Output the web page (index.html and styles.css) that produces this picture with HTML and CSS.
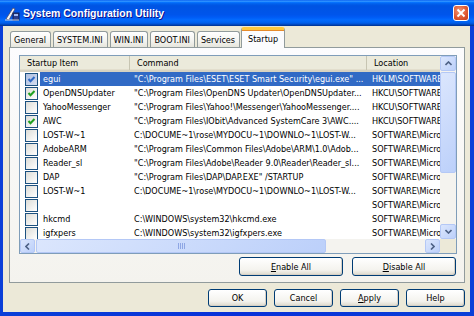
FILE: index.html
```html
<!DOCTYPE html>
<html lang="en">
<head>
  <meta charset="UTF-8" />
  <title>System Configuration Utility</title>
  <link rel="stylesheet" href="styles.css">
</head>
<body>
  <div class="window">
    <div class="titlebar">
      <svg class="app-icon" width="16" height="16" viewBox="0 0 16 16">
        <path d="M2 14 L9 3 L11 4 L5 15 Z" fill="#f4f4f4" stroke="#4a4a6a" stroke-width="0.8"/>
        <rect x="9" y="8" width="6" height="7" fill="#2b3f8f" stroke="#10183a" stroke-width="0.8"/>
        <rect x="10" y="9" width="4" height="2" fill="#9fb8ef"/>
        <path d="M1 15 H15" stroke="#cfd6e6" stroke-width="1"/>
      </svg>
      <span class="title">System Configuration Utility</span>
      <div class="close-btn">
        <svg width="10" height="10" viewBox="0 0 10 10"><path d="M1.5 1.5 L8.5 8.5 M8.5 1.5 L1.5 8.5" stroke="#fff" stroke-width="1.8"/></svg>
      </div>
    </div>

    <div class="client">
      <div class="tabs">
        <div class="tab">General</div>
        <div class="tab">SYSTEM.INI</div>
        <div class="tab">WIN.INI</div>
        <div class="tab">BOOT.INI</div>
        <div class="tab">Services</div>
        <div class="tab active">Startup</div>
      </div>

      <div class="panel">
        <div class="list">
          <div class="viewport">
            <div class="header">
              <div class="col c1">Startup Item</div>
              <div class="col c2">Command</div>
              <div class="col c3">Location</div>
            </div>
            <div class="row sel">
              <div class="cell c1"><span class="cb on"></span><span class="label">egui</span></div>
              <div class="cell c2">"C:\Program Files\ESET\ESET Smart Security\egui.exe" ...</div>
              <div class="cell c3">HKLM\SOFTWARE\Microsoft\Windows\CurrentVersion\Run</div>
            </div>
            <div class="row">
              <div class="cell c1"><span class="cb on"></span><span class="label">OpenDNSUpdater</span></div>
              <div class="cell c2">"C:\Program Files\OpenDNS Updater\OpenDNSUpdater...</div>
              <div class="cell c3">HKCU\SOFTWARE\Microsoft\Windows\CurrentVersion\Run</div>
            </div>
            <div class="row">
              <div class="cell c1"><span class="cb"></span><span class="label">YahooMessenger</span></div>
              <div class="cell c2">"C:\Program Files\Yahoo!\Messenger\YahooMessenger....</div>
              <div class="cell c3">HKCU\SOFTWARE\Microsoft\Windows\CurrentVersion\Run</div>
            </div>
            <div class="row">
              <div class="cell c1"><span class="cb on"></span><span class="label">AWC</span></div>
              <div class="cell c2">"C:\Program Files\IObit\Advanced SystemCare 3\AWC....</div>
              <div class="cell c3">HKCU\SOFTWARE\Microsoft\Windows\CurrentVersion\Run</div>
            </div>
            <div class="row">
              <div class="cell c1"><span class="cb"></span><span class="label">LOST-W~1</span></div>
              <div class="cell c2">C:\DOCUME~1\rose\MYDOCU~1\DOWNLO~1\LOST-W...</div>
              <div class="cell c3">SOFTWARE\Microsoft\Shared Tools\MSConfig</div>
            </div>
            <div class="row">
              <div class="cell c1"><span class="cb"></span><span class="label">AdobeARM</span></div>
              <div class="cell c2">"C:\Program Files\Common Files\Adobe\ARM\1.0\Adob...</div>
              <div class="cell c3">SOFTWARE\Microsoft\Shared Tools\MSConfig</div>
            </div>
            <div class="row">
              <div class="cell c1"><span class="cb"></span><span class="label">Reader_sl</span></div>
              <div class="cell c2">"C:\Program Files\Adobe\Reader 9.0\Reader\Reader_sl...</div>
              <div class="cell c3">SOFTWARE\Microsoft\Shared Tools\MSConfig</div>
            </div>
            <div class="row">
              <div class="cell c1"><span class="cb"></span><span class="label">DAP</span></div>
              <div class="cell c2">"C:\Program Files\DAP\DAP.EXE" /STARTUP</div>
              <div class="cell c3">SOFTWARE\Microsoft\Shared Tools\MSConfig</div>
            </div>
            <div class="row">
              <div class="cell c1"><span class="cb"></span><span class="label">LOST-W~1</span></div>
              <div class="cell c2">C:\DOCUME~1\rose\MYDOCU~1\DOWNLO~1\LOST-W...</div>
              <div class="cell c3">SOFTWARE\Microsoft\Shared Tools\MSConfig</div>
            </div>
            <div class="row">
              <div class="cell c1"><span class="cb"></span><span class="label"></span></div>
              <div class="cell c2"></div>
              <div class="cell c3">SOFTWARE\Microsoft\Shared Tools\MSConfig</div>
            </div>
            <div class="row">
              <div class="cell c1"><span class="cb"></span><span class="label">hkcmd</span></div>
              <div class="cell c2">C:\WINDOWS\system32\hkcmd.exe</div>
              <div class="cell c3">SOFTWARE\Microsoft\Shared Tools\MSConfig</div>
            </div>
            <div class="row">
              <div class="cell c1"><span class="cb"></span><span class="label">igfxpers</span></div>
              <div class="cell c2">C:\WINDOWS\system32\igfxpers.exe</div>
              <div class="cell c3">SOFTWARE\Microsoft\Shared Tools\MSConfig</div>
            </div>
          </div>

          <div class="vscroll">
            <div class="sb-btn"><svg width="7" height="5" viewBox="0 0 7 5"><path d="M0.5 4 L3.5 1 L6.5 4" fill="none" stroke="#4d6185" stroke-width="1.6"/></svg></div>
            <div class="sb-thumb v"></div>
            <div class="sb-track"></div>
            <div class="sb-btn"><svg width="7" height="5" viewBox="0 0 7 5"><path d="M0.5 1 L3.5 4 L6.5 1" fill="none" stroke="#4d6185" stroke-width="1.6"/></svg></div>
          </div>

          <div class="hscroll">
            <div class="sb-btn"><svg width="5" height="7" viewBox="0 0 5 7"><path d="M4 0.5 L1 3.5 L4 6.5" fill="none" stroke="#4d6185" stroke-width="1.6"/></svg></div>
            <div class="sb-thumb h"><span class="grip"></span></div>
            <div class="sb-track"></div>
            <div class="sb-btn"><svg width="5" height="7" viewBox="0 0 5 7"><path d="M1 0.5 L4 3.5 L1 6.5" fill="none" stroke="#4d6185" stroke-width="1.6"/></svg></div>
          </div>
          <div class="corner"></div>
        </div>

        <div class="panel-buttons">
          <button class="btn wide"><u>E</u>nable All</button>
          <button class="btn wide"><u>D</u>isable All</button>
        </div>
      </div>

      <div class="dialog-buttons">
        <button class="btn">OK</button>
        <button class="btn">Cancel</button>
        <button class="btn"><u>A</u>pply</button>
        <button class="btn">Help</button>
      </div>
    </div>
  </div>
</body>
</html>
```

FILE: styles.css
```css
* { box-sizing: border-box; }
body {
  margin: 0;
  width: 474px;
  height: 316px;
  overflow: hidden;
  font-family: "DejaVu Sans Condensed", "DejaVu Sans", sans-serif;
  font-stretch: condensed;
  font-size: 9px;
  color: #000;
}
.window {
  width: 474px;
  height: 316px;
  display: flex;
  flex-direction: column;
  background: linear-gradient(90deg, #0a3fd8, #0831d9 50%, #0a3fd8);
}
/* XP Luna title bar */
.titlebar {
  height: 26px;
  flex: none;
  display: flex;
  align-items: center;
  padding: 0 5px 0 4px;
  background: linear-gradient(#0058ee 0%, #3593ff 4%, #288eff 6%, #127dff 8%, #036ffc 10%, #0262ee 14%, #0057e5 20%, #0054e3 24%, #0055eb 56%, #005bf5 66%, #026afe 76%, #0062ef 86%, #0052d6 92%, #0040ab 96%, #003092 100%);
}
.app-icon { flex: none; margin-right: 3px; }
.title {
  flex: 1;
  color: #fff;
  font-family: "Liberation Sans", sans-serif;
  font-stretch: normal;
  font-weight: bold;
  font-size: 10.5px;
  text-shadow: 1px 1px #0f1089;
}
.close-btn {
  width: 16px;
  height: 16px;
  border: 1px solid #fff;
  border-radius: 3px;
  background: radial-gradient(circle at 40% 35%, #f19a7b, #e05a33 55%, #c0391a);
  display: flex;
  align-items: center;
  justify-content: center;
}
.client {
  flex: 1;
  margin: 0 4px 4px 3px;
  background: #ece9d8;
  padding: 1px 5px 0 6px;
  display: flex;
  flex-direction: column;
}
/* tabs */
.tabs {
  height: 20px;
  display: flex;
  align-items: flex-end;
  padding-left: 1px;
  position: relative;
  z-index: 1;
}
.tab {
  height: 16px;
  padding: 0 4px 0 3px;
  margin-right: 2px;
  display: flex;
  align-items: center;
  border: 1px solid #919b9c;
  border-bottom: none;
  border-radius: 3px 3px 0 0;
  background: linear-gradient(#fff, #f3f3ef 60%, #e6e5dc);
}
.tab.active {
  height: 21px;
  margin: 0 0 -1px -1px;
  padding: 0 6px 1px;
  background: #fcfcfe;
  border-top: 3px solid #ffc83c;
  box-shadow: inset 0 1px 0 #e68b2c;
}
.panel {
  height: 236px;
  flex: none;
  border: 1px solid #919b9c;
  background: linear-gradient(#fcfcfe, #f4f3ee);
  padding: 7px 7px 0 9px;
  display: flex;
  flex-direction: column;
}
/* list view */
.list {
  height: 199px;
  border: 1px solid #7f9db9;
  background: #fff;
  display: grid;
  grid-template-columns: 1fr 16px;
  grid-template-rows: 1fr 14px;
}
.viewport { overflow: hidden; white-space: nowrap; }
.header {
  height: 16px;
  display: flex;
  background: #ebeadb;
  border-bottom: 2px solid #d6d2c2;
  box-shadow: inset 0 -1px 0 #e2decd;
}
.col {
  flex: none;
  padding-left: 7px;
  line-height: 14px;
}
.col.c1, .col.c2 { border-right: 1px solid #c7c5b2; }
.c1 { width: 110px; }
.c2 { width: 237px; }
.c3 { width: 74px; overflow: hidden; }
.row {
  height: 14px;
  display: flex;
  align-items: center;
}
.cell { flex: none; overflow: hidden; line-height: 14px; padding-left: 4px; }
.cell.c1 { display: flex; align-items: center; padding-left: 5px; }
.cell.c3 { padding-left: 5px; }
.label { padding-left: 3px; margin-left: 2px; flex: 1; }
.cb {
  flex: none;
  width: 13px;
  height: 13px;
  border: 1px solid #1c5180;
  background: linear-gradient(135deg, #dcdcd7, #fff);
  display: inline-block;
}
.cb.on {
  background-image: url("data:image/svg+xml;utf8,<svg xmlns='http://www.w3.org/2000/svg' width='11' height='11'><path d='M2.5 5 L4.5 7.2 L8.5 3' fill='none' stroke='%2321a121' stroke-width='2'/></svg>"), linear-gradient(135deg, #dcdcd7, #fff);
}
.row.sel .cell { background: #316ac5; color: #fff; }
.row.sel .cell.c1 { background: none; }
.row.sel .label { background: #316ac5; color: #fff; }
.row.sel .cb {
  background-image: url("data:image/svg+xml;utf8,<svg xmlns='http://www.w3.org/2000/svg' width='11' height='11'><path d='M2.5 5 L4.5 7.2 L8.5 3' fill='none' stroke='%23316ac5' stroke-width='2'/></svg>"), linear-gradient(135deg, #aebfe0, #d4ddf0);
}
/* scrollbars */
.vscroll, .hscroll {
  display: flex;
  background: #f4f3ef;
}
.vscroll { flex-direction: column; }
.sb-btn, .sb-thumb {
  flex: none;
  border: 1px solid #b4c8f6;
  border-radius: 2px;
  background: linear-gradient(135deg, #dbe6fd, #bcd0fa);
  display: flex;
  align-items: center;
  justify-content: center;
}
.vscroll .sb-btn { height: 15px; }
.hscroll .sb-btn { width: 15px; }
.sb-thumb.v { height: 101px; margin-top: 1px; }
.sb-thumb.h { width: 290px; margin-left: 1px; }
.sb-track { flex: 1; }
.grip {
  width: 7px;
  height: 6px;
  background: repeating-linear-gradient(90deg, #8ea6e4 0 1px, transparent 1px 2px);
}
.corner { background: #ece9d8; }
/* buttons */
.panel-buttons {
  margin-top: 3px;
  display: flex;
  justify-content: flex-end;
  gap: 9px;
  padding-right: 1px;
}
.dialog-buttons {
  margin-top: 6px;
  display: flex;
  justify-content: flex-end;
  gap: 7px;
}
.btn {
  width: 59px;
  height: 18px;
  padding: 0;
  font: inherit;
  color: #000;
  border: 1px solid #003c74;
  border-radius: 3px;
  background: linear-gradient(#fff, #f4f3ee 70%, #dcd8cb);
  box-shadow: inset -1px -1px 0 #d6d0c5;
}
.btn.wide { width: 104px; height: 19px; }
```
